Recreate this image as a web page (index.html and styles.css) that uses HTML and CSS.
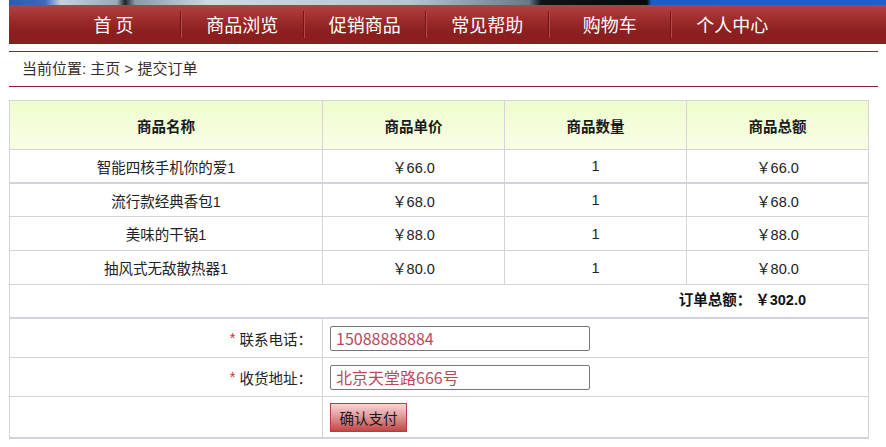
FILE: index.html
```html
<!DOCTYPE html>
<html lang="zh-CN">
<head>
<meta charset="utf-8">
<title>提交订单</title>
<link rel="stylesheet" href="styles.css">
</head>
<body>
<div class="page">
  <div class="banner"></div>
  <nav class="nav">
    <a class="nav-item first" href="#">首 页</a>
    <span class="sep"></span>
    <a class="nav-item" href="#">商品浏览</a>
    <span class="sep"></span>
    <a class="nav-item" href="#">促销商品</a>
    <span class="sep"></span>
    <a class="nav-item" href="#">常见帮助</a>
    <span class="sep"></span>
    <a class="nav-item" href="#">购物车</a>
    <span class="sep"></span>
    <a class="nav-item" href="#">个人中心</a>
  </nav>
  <div class="crumb">当前位置: 主页 &gt; 提交订单</div>

  <div class="order">
    <div class="row head">
      <div class="cell">商品名称</div>
      <div class="cell">商品单价</div>
      <div class="cell">商品数量</div>
      <div class="cell">商品总额</div>
    </div>
    <div class="row item thick">
      <div class="cell">智能四核手机你的爱1</div>
      <div class="cell">￥66.0</div>
      <div class="cell">1</div>
      <div class="cell">￥66.0</div>
    </div>
    <div class="row item">
      <div class="cell">流行款经典香包1</div>
      <div class="cell">￥68.0</div>
      <div class="cell">1</div>
      <div class="cell">￥68.0</div>
    </div>
    <div class="row item tall">
      <div class="cell">美味的干锅1</div>
      <div class="cell">￥88.0</div>
      <div class="cell">1</div>
      <div class="cell">￥88.0</div>
    </div>
    <div class="row item tall">
      <div class="cell">抽风式无敌散热器1</div>
      <div class="cell">￥80.0</div>
      <div class="cell">1</div>
      <div class="cell">￥80.0</div>
    </div>
    <div class="row total thick">订单总额： ￥302.0</div>
    <div class="row form">
      <div class="label"><span class="req">*</span> 联系电话：</div>
      <div class="field"><input class="input" type="text" value="15088888884"></div>
    </div>
    <div class="row form">
      <div class="label"><span class="req">*</span> 收货地址：</div>
      <div class="field"><input class="input" type="text" value="北京天堂路666号"></div>
    </div>
    <div class="row form last">
      <div class="label"></div>
      <div class="field"><button class="pay" type="button">确认支付</button></div>
    </div>
  </div>
</div>
</body>
</html>
```

FILE: styles.css
```css
* { box-sizing: border-box; }

body {
  margin: 0;
  background: #fff;
  font-family: "Liberation Sans", "Noto Sans CJK SC", sans-serif;
  font-size: 14px;
  color: #333;
}

.page {
  margin-left: 9px;
  width: 877px;
}

.banner {
  height: 5px;
  background: linear-gradient(to right,
    #2a5cb0 0, #3a6ab8 36px, #c8d0dc 52px, #9aa8b8 108px, #20242a 116px,
    #8a98a8 126px, #d0d8e0 200px, #b8c4d0 400px, #6a7888 520px,
    #101418 532px, #080a0c 638px, #1a5cc8 642px, #1d5fcc 877px);
}

.nav {
  display: flex;
  align-items: center;
  height: 39px;
  padding-left: 50px;
  background: linear-gradient(#b44141 0, #9a2828 45%, #8b1e1f 70%, #8b1e1f 100%);
}

.nav-item {
  flex: 0 0 120.5px;
  text-align: center;
  color: #fff;
  text-decoration: none;
  font-family: "Noto Sans CJK SC", sans-serif;
  font-size: 18px;
  line-height: 39px;
}

.nav-item.first {
  flex-basis: 121px;
  padding-right: 12px;
}

.sep {
  flex: 0 0 2px;
  height: 27px;
  background: linear-gradient(to right, #741414 50%, #b24a4a 50%);
}

.crumb {
  margin-top: 7px;
  width: 869px;
  height: 36px;
  border-top: 1px solid #8a2424;
  border-bottom: 1px solid #8a2424;
  padding-left: 13px;
  line-height: 33px;
  font-family: "Liberation Sans", "Noto Sans CJK SC", sans-serif;
  font-size: 15px;
  color: #3a2c2c;
}

.order {
  margin-top: 13px;
  width: 860px;
  border: 1px solid #d4d3dc;
  border-bottom-width: 2px;
  font-size: 14.5px;
}

.row {
  display: grid;
  grid-template-columns: 312px 182px 182px 182px;
  border-bottom: 1px solid #d4d3dc;
}

.row.thick { border-bottom-width: 2px; }
.row.last { border-bottom: 0; }

.cell {
  display: flex;
  align-items: center;
  justify-content: center;
  color: #222;
}

.cell + .cell { border-left: 1px solid #d4d3dc; }

.head {
  height: 49px;
  background: linear-gradient(#effccc, #f8fee6);
}

.head .cell {
  font-weight: bold;
  color: #1a1a1a;
}

.item { height: 33px; }
.item.thick { height: 34px; }
.item.tall { height: 34px; }

.total {
  display: block;
  height: 34px;
  line-height: 31px;
  text-align: right;
  padding-right: 62px;
  font-weight: bold;
  color: #111;
}

.form {
  grid-template-columns: 312px 1fr;
  height: 39px;
}

.form.last { height: 40px; }

.label {
  display: flex;
  align-items: center;
  justify-content: flex-end;
  padding-right: 10px;
  font-size: 14.5px;
  color: #222;
}

.req {
  color: #e02828;
  margin-right: 4px;
}

.field {
  display: flex;
  align-items: center;
  border-left: 1px solid #d4d3dc;
  padding-left: 7px;
}

.input {
  width: 260px;
  height: 25px;
  border: 1px solid #777;
  border-radius: 2px;
  padding: 0 5px;
  font-family: "Noto Sans CJK SC", sans-serif;
  font-size: 16px;
  color: #b94a5c;
  background: #fff;
}

.form.last .field { align-items: flex-start; padding-top: 6px; }

.pay {
  width: 77px;
  height: 29px;
  border: 1px solid #b83c3c;
  background: linear-gradient(#f6d6d6, #e29a9a 45%, #c24646);
  font-family: "Noto Sans CJK SC", sans-serif;
  font-size: 14.5px;
  color: #1a1a1a;
  padding: 0;
}
```
